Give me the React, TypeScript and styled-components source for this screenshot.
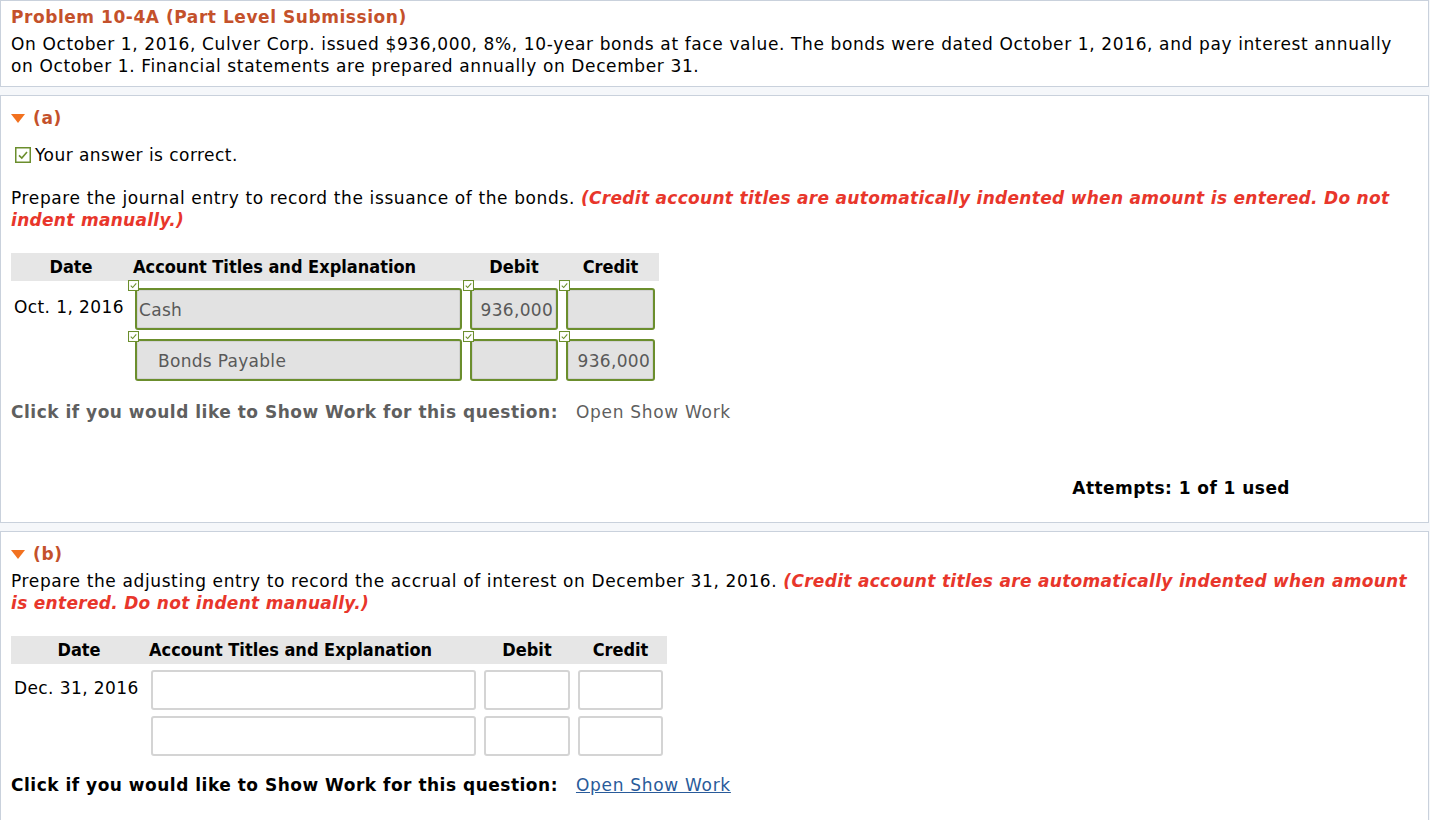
import React from 'react'
import styled, { createGlobalStyle, css } from 'styled-components'

const GlobalStyle = createGlobalStyle`
  html, body {
    margin: 0;
    padding: 0;
    background: #f5f7fa;
  }
  body {
    font-family: 'DejaVu Sans', Verdana, sans-serif;
    font-size: 17px;
    letter-spacing: 0.62px;
    color: #000;
  }
`

const Page = styled.div`
  width: 1429px;
  display: flex;
  flex-direction: column;
  gap: 8px;
`

const Panel = styled.section<{ $pt?: number; $pb?: number }>`
  background: #fff;
  border: 1px solid #c9d1dc;
  padding: ${(p) => p.$pt ?? 11}px 10px ${(p) => p.$pb ?? 0}px 10px;
  line-height: 22px;
`

const Title = styled.h1`
  margin: 0;
  font-size: 17px;
  font-weight: bold;
  letter-spacing: 0.55px;
  color: #c4512b;
  line-height: 22px;
`

const Text = styled.p<{ $mt?: number }>`
  margin: ${(p) => p.$mt ?? 0}px 0 0 0;
  line-height: 22px;
`

const Note = styled.span`
  color: #e8362b;
  font-weight: bold;
  font-style: italic;
  letter-spacing: 0.3px;
`

const PartHeader = styled.div`
  display: flex;
  align-items: center;
  gap: 8px;
  font-weight: bold;
  color: #c4512b;
`

const Triangle = () => (
  <svg width='14' height='9' viewBox='0 0 14 9'>
    <polygon points='0,0 14,0 7,9' fill='#f2711f' />
  </svg>
)

const Correct = styled.div`
  display: flex;
  align-items: center;
  gap: 4px;
  margin-top: 15px;
  padding-left: 4px;
  letter-spacing: 0.45px;
`

const CheckIcon = ({ size }: { size: number }) => (
  <svg width={size} height={size} viewBox='0 0 16 16'>
    <rect x='0.75' y='0.75' width='14.5' height='14.5' fill='#fff' stroke='#6b8e2d' strokeWidth='1.5' />
    <path d='M4 8.3 L6.8 11 L12 5' fill='none' stroke='#6b8e2d' strokeWidth='1.6' />
  </svg>
)

const TableGrid = styled.div<{ $cols: string; $mt: number }>`
  display: grid;
  grid-template-columns: ${(p) => p.$cols};
  width: max-content;
  margin-top: ${(p) => p.$mt}px;
  letter-spacing: 0.4px;
`

const HeadCell = styled.div<{ $align?: string }>`
  background: #e6e6e6;
  height: 28px;
  line-height: 28px;
  font-family: 'DejaVu Sans Condensed', 'DejaVu Sans', Tahoma, sans-serif;
  font-stretch: condensed;
  font-weight: bold;
  font-size: 18px;
  letter-spacing: 0;
  text-align: ${(p) => p.$align ?? 'center'};
  padding: 0 2px;
`

const Cell = styled.div<{ $mt: number }>`
  padding: 0 4px;
  margin-top: ${(p) => p.$mt}px;
  display: flex;
  align-items: center;
`

const DateCell = styled(Cell)`
  padding: 0 3px 4px 3px;
  white-space: nowrap;
`

const InputWrap = styled.div`
  position: relative;
  flex: 1;
`

const Field = styled.div<{ $graded?: boolean; $h: number; $right?: boolean; $indent?: number }>`
  box-sizing: border-box;
  height: ${(p) => p.$h}px;
  border-radius: 3px;
  color: #595959;
  letter-spacing: 0.3px;
  display: flex;
  align-items: center;
  justify-content: ${(p) => (p.$right ? 'flex-end' : 'flex-start')};
  padding: 2px 3px 0 ${(p) => p.$indent ?? 2}px;
  ${(p) =>
    p.$graded
      ? css`
          background: #e2e2e2;
          border: 2px solid #6b8e2d;
          box-shadow: inset 0 0 0 1px #d2d2d2;
        `
      : css`
          background: #fff;
          border: 2px solid #d4d4d4;
        `}
`

const Badge = styled.span`
  position: absolute;
  left: -7px;
  top: -8px;
  line-height: 0;
`

const ShowWork = styled.div<{ $muted?: boolean; $mt: number }>`
  margin-top: ${(p) => p.$mt}px;
  display: flex;
  gap: 18px;
  color: ${(p) => (p.$muted ? '#5f5f5f' : '#000')};
`

const ShowLabel = styled.span`
  font-weight: bold;
  letter-spacing: 0.5px;
`

const ShowLink = styled.a<{ $muted?: boolean }>`
  letter-spacing: 0.7px;
  color: ${(p) => (p.$muted ? '#5f5f5f' : '#295b9a')};
  text-decoration: ${(p) => (p.$muted ? 'none' : 'underline')};
`

const Attempts = styled.div`
  display: flex;
  justify-content: flex-end;
  padding-right: 128px;
  margin-top: 54px;
  font-weight: bold;
  letter-spacing: 0.45px;
`

interface IEntry {
  date?: string
  account: string
  debit: string
  credit: string
  indent?: number
}

interface ITableProps {
  cols: string
  rows: IEntry[]
  graded?: boolean
  h: number
  mt: number
  rowGap: number[]
}

const JournalTable = ({ cols, rows, graded, h, mt, rowGap }: ITableProps) => (
  <TableGrid $cols={cols} $mt={mt}>
    <HeadCell>Date</HeadCell>
    <HeadCell $align='left'>Account Titles and Explanation</HeadCell>
    <HeadCell>Debit</HeadCell>
    <HeadCell>Credit</HeadCell>
    {rows.map((r, i) => (
      <React.Fragment key={i}>
        <DateCell $mt={rowGap[i]}>{r.date}</DateCell>
        {[
          { v: r.account, right: false, indent: r.indent },
          { v: r.debit, right: true },
          { v: r.credit, right: true },
        ].map((f, j) => (
          <Cell key={j} $mt={rowGap[i]}>
            <InputWrap>
              <Field $graded={graded} $h={h} $right={f.right} $indent={f.indent}>
                {f.v}
              </Field>
              {graded && (
                <Badge>
                  <CheckIcon size={11} />
                </Badge>
              )}
            </InputWrap>
          </Cell>
        ))}
      </React.Fragment>
    ))}
  </TableGrid>
)

const App = () => (
  <>
    <GlobalStyle />
    <Page>
      <Panel $pt={5} $pb={9}>
        <Title>Problem 10-4A (Part Level Submission)</Title>
        <Text $mt={5}>
          On October 1, 2016, Culver Corp. issued $936,000, 8%, 10-year bonds at face value. The bonds were dated
          October 1, 2016, and pay interest annually on October 1. Financial statements are prepared annually on
          December 31.
        </Text>
      </Panel>

      <Panel $pb={23}>
        <PartHeader>
          <Triangle />
          (a)
        </PartHeader>
        <Correct>
          <CheckIcon size={16} />
          Your answer is correct.
        </Correct>
        <Text $mt={21}>
          Prepare the journal entry to record the issuance of the bonds.{' '}
          <Note>(Credit account titles are automatically indented when amount is entered. Do not indent manually.)</Note>
        </Text>
        <JournalTable
          cols='120px 335px 96px 97px'
          graded
          h={42}
          mt={22}
          rowGap={[7, 9]}
          rows={[
            { date: 'Oct. 1, 2016', account: 'Cash', debit: '936,000', credit: '' },
            { account: 'Bonds Payable', debit: '', credit: '936,000', indent: 21 },
          ]}
        />
        <ShowWork $muted $mt={20}>
          <ShowLabel>Click if you would like to Show Work for this question:</ShowLabel>
          <ShowLink $muted>Open Show Work</ShowLink>
        </ShowWork>
        <Attempts>Attempts: 1 of 1 used</Attempts>
      </Panel>

      <Panel $pb={30}>
        <PartHeader>
          <Triangle />
          (b)
        </PartHeader>
        <Text $mt={5}>
          Prepare the adjusting entry to record the accrual of interest on December 31, 2016.{' '}
          <Note>(Credit account titles are automatically indented when amount is entered. Do not indent manually.)</Note>
        </Text>
        <JournalTable
          cols='136px 333px 94px 93px'
          h={40}
          mt={22}
          rowGap={[6, 6]}
          rows={[
            { date: 'Dec. 31, 2016', account: '', debit: '', credit: '' },
            { account: '', debit: '', credit: '' },
          ]}
        />
        <ShowWork $mt={18}>
          <ShowLabel>Click if you would like to Show Work for this question:</ShowLabel>
          <ShowLink href='#'>Open Show Work</ShowLink>
        </ShowWork>
      </Panel>
    </Page>
  </>
)

export default App
